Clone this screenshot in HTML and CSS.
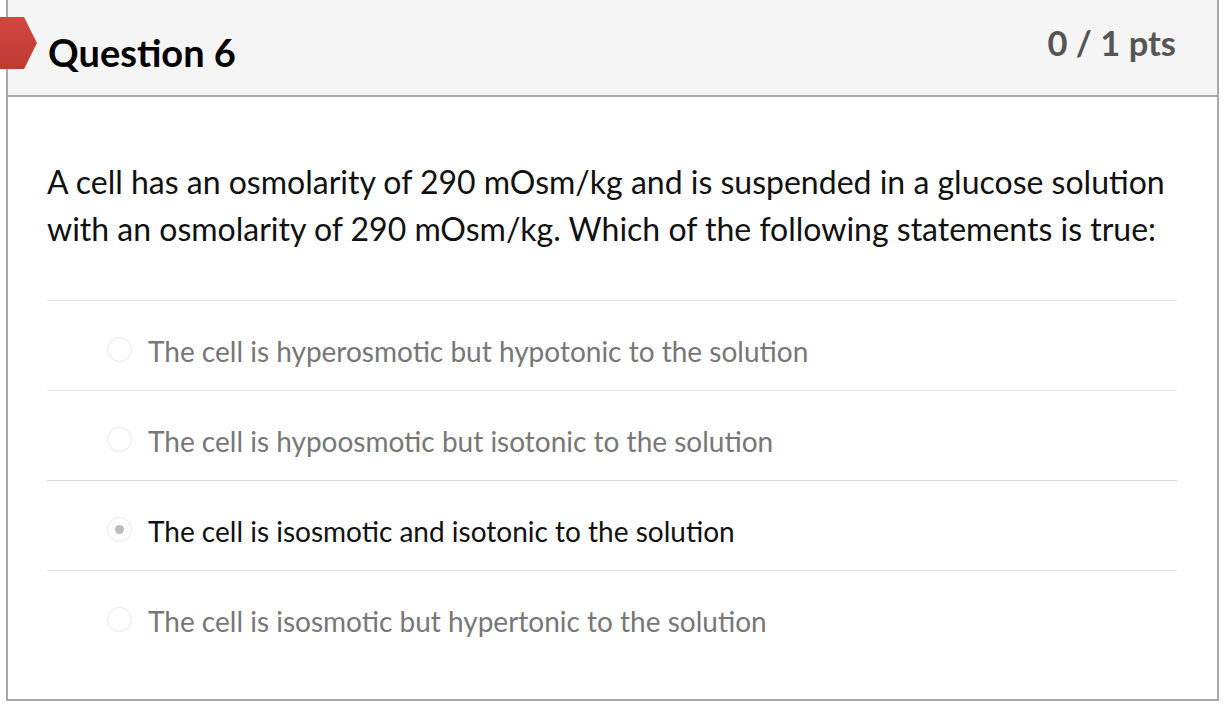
FILE: index.html
```html
<!DOCTYPE html>
<html>
<head>
<meta charset="utf-8">
<link rel="stylesheet" href="styles.css">
</head>
<body>
<div class="question">
  <div class="marker"></div>
  <div class="header">
    <h2 class="title">Question 6</h2>
    <div class="pts">0 / 1 pts</div>
  </div>
  <div class="content">
    <p class="text">A cell has an osmolarity of 290 mOsm/kg and is suspended in a glucose solution with an osmolarity of 290 mOsm/kg. Which of the following statements is true:</p>
    <div class="answers">
      <div class="answer"><span class="radio"></span><span class="label">The cell is hyperosmotic but hypotonic to the solution</span></div>
      <div class="answer"><span class="radio"></span><span class="label">The cell is hypoosmotic but isotonic to the solution</span></div>
      <div class="answer selected"><span class="radio"><span class="dot"></span></span><span class="label">The cell is isosmotic and isotonic to the solution</span></div>
      <div class="answer last"><span class="radio"></span><span class="label">The cell is isosmotic but hypertonic to the solution</span></div>
    </div>
  </div>
</div>
</body>
</html>
```
FILE: styles.css
```css
html, body {
  margin: 0;
  padding: 0;
  background: #fff;
}
body {
  font-family: Lato, "Open Sans", sans-serif;
  color: #111;
}
.question {
  position: relative;
  margin-left: 6px;
  width: 1213px;
  height: 701px;
  border: 2px solid #a8a8a8;
  border-top: none;
  box-sizing: border-box;
}
.marker {
  position: absolute;
  left: -8px;
  top: 17px;
  width: 37px;
  height: 52px;
  background: linear-gradient(#d24840, #bf3932);
  clip-path: polygon(0 0, 65% 0, 100% 50%, 65% 100%, 0 100%);
}
.header {
  height: 97px;
  background: #f5f5f5;
  border-bottom: 2px solid #a8a8a8;
  display: flex;
  justify-content: space-between;
  align-items: flex-start;
  padding: 0 41px 0 40px;
  box-sizing: border-box;
}
.title {
  margin: 27px 0 0;
  font-size: 38px;
  font-weight: 700;
  line-height: 50px;
  color: #000;
}
.pts {
  margin-top: 21px;
  font-size: 34.5px;
  font-weight: 700;
  line-height: 44px;
  color: #555;
}
.content {
  padding: 0 40px 0 39px;
}
.text {
  margin: 0;
  padding-top: 61px;
  font-size: 32px;
  line-height: 47px;
  color: #111;
}
.answers {
  margin-top: 48px;
}
.answer {
  height: 90px;
  border-top: 1px solid #e8e8e8;
  display: flex;
  align-items: center;
  padding: 11px 0 0 60px;
  box-sizing: border-box;
}
.answer.selected {
  border-top-color: #d8d8d8;
}
.radio {
  width: 23px;
  height: 23px;
  border-radius: 50%;
  border: 1px solid #eaeaea;
  background: #fff;
  display: flex;
  align-items: center;
  justify-content: center;
  flex-shrink: 0;
  margin-top: -3px;
}
.dot {
  width: 9px;
  height: 9px;
  border-radius: 50%;
  background: #bdbdbd;
}
.label {
  margin-left: 16px;
  font-size: 28px;
  color: #777;
}
.selected .label {
  color: #111;
}
```
